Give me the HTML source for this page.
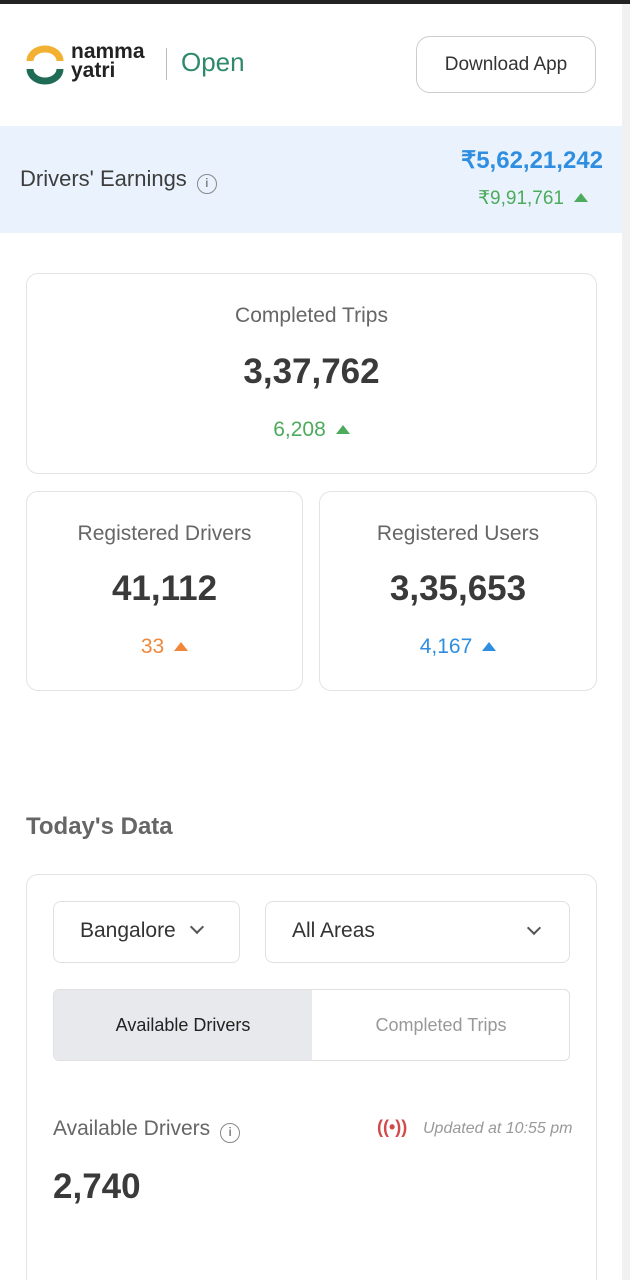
<!DOCTYPE html>
<html style="overflow:hidden;height:1280px"><head><meta charset="utf-8"><style>
*{box-sizing:border-box;margin:0;padding:0}
body{width:630px;height:1280px;overflow:hidden;background:#fff;font-family:"Liberation Sans",sans-serif;color:#3d3d3d;position:relative}
.a{position:absolute}
.card{position:absolute;border:1px solid #e3e3e3;border-radius:12px;background:#fff}
.c{text-align:center;width:100%;position:absolute;left:0}
.lab{font-size:21px;color:#666}
.big{font-size:35px;font-weight:bold;color:#3a3a3a}
.tri{display:inline-block;width:0;height:0;border-left:7px solid transparent;border-right:7px solid transparent;border-bottom:9px solid;margin-left:10px;vertical-align:2px}
.info{display:inline-block;width:20px;height:20px;border:1.5px solid #888;border-radius:50%;font-size:12px;text-align:center;line-height:17px;color:#888;font-weight:bold;vertical-align:-1px;margin-left:10px}
</style></head><body>
<div class="a" style="left:0;top:0;width:630px;height:4px;background:#222"></div>
<div class="a" style="left:622px;top:4px;width:8px;height:1276px;background:#f1f1f1"></div>
<svg class="a" style="left:26px;top:44px" width="38" height="42" viewBox="0 0 38 42"><path d="M4 17 A15 12 0 0 1 34 17" fill="none" stroke="#f2b132" stroke-width="7"/><path d="M4 25 A15 12 0 0 0 34 25" fill="none" stroke="#1f6b55" stroke-width="7"/></svg>
<div class="a" style="left:71px;top:42px;font-size:21px;line-height:19px;color:#222;font-weight:bold">namma<br>yatri</div>
<div class="a" style="left:166px;top:48px;width:1px;height:32px;background:#bbb"></div>
<div class="a" style="left:181px;top:47px;font-size:26px;color:#2e8a6a">Open</div>
<div class="a" style="left:416px;top:36px;width:180px;height:57px;border:1px solid #ccc;border-radius:14px;text-align:center;line-height:55px;font-size:19px;color:#333">Download App</div>
<div class="a" style="left:0;top:126px;width:622px;height:107px;background:#eaf3fd"></div>
<div class="a" style="left:20px;top:166px;font-size:22px;color:#3d3d3d">Drivers' Earnings<span class="info">i</span></div>
<div class="a" style="right:27px;top:146px;font-size:24px;font-weight:bold;color:#2f8ee0">₹5,62,21,242</div>
<div class="a" style="right:42px;top:187px;font-size:19px;color:#4cab5c">₹9,91,761<span class="tri" style="border-bottom-color:#4cab5c"></span></div>
<div class="card" style="left:26px;top:273px;width:571px;height:201px">
<div class="c lab" style="top:30px">Completed Trips</div>
<div class="c big" style="top:78px">3,37,762</div>
<div class="c" style="top:144px;font-size:21px;color:#4cab5c">6,208<span class="tri" style="border-bottom-color:#4cab5c"></span></div></div>
<div class="card" style="left:26px;top:491px;width:277px;height:200px">
<div class="c lab" style="top:30px">Registered Drivers</div>
<div class="c big" style="top:77px">41,112</div>
<div class="c" style="top:143px;font-size:21px;color:#f0883a">33<span class="tri" style="border-bottom-color:#f0883a"></span></div></div>
<div class="card" style="left:319px;top:491px;width:278px;height:200px">
<div class="c lab" style="top:30px">Registered Users</div>
<div class="c big" style="top:77px">3,35,653</div>
<div class="c" style="top:143px;font-size:21px;color:#2f8ee0">4,167<span class="tri" style="border-bottom-color:#2f8ee0"></span></div></div>
<div class="a" style="left:26px;top:813px;font-size:24px;font-weight:bold;color:#666">Today's Data</div>
<div class="card" style="left:26px;top:874px;width:571px;height:420px">
<div class="a" style="left:26px;top:26px;width:187px;height:62px;border:1px solid #e0e0e0;border-radius:8px;font-size:21px;padding:17px 26px;color:#333">Bangalore <span style="display:inline-block;width:10px;height:10px;border-right:2px solid #555;border-bottom:2px solid #555;transform:rotate(45deg);margin-left:10px;vertical-align:5px"></span></div>
<div class="a" style="left:238px;top:26px;width:305px;height:62px;border:1px solid #e0e0e0;border-radius:8px;font-size:21px;padding:17px 26px;color:#333">All Areas<span style="position:absolute;right:30px;top:21px;width:10px;height:10px;border-right:2px solid #555;border-bottom:2px solid #555;transform:rotate(45deg)"></span></div>
<div class="a" style="left:26px;top:114px;width:517px;height:72px;border:1px solid #e0e0e0;border-radius:6px;overflow:hidden">
<div class="a" style="left:0;top:0;width:258px;height:72px;background:#e8e9ec;text-align:center;line-height:70px;font-size:18px;color:#222">Available Drivers</div>
<div class="a" style="left:258px;top:0;width:258px;height:72px;text-align:center;line-height:70px;font-size:18px;color:#999">Completed Trips</div></div>
<div class="a" style="left:26px;top:242px;font-size:21px;color:#666">Available Drivers<span class="info">i</span></div>
<div class="a" style="left:350px;top:242px;font-size:18px;color:#d24a4a;font-weight:bold">((•))</div>
<div class="a" style="left:396px;top:245px;font-size:16px;font-style:italic;color:#999">Updated at 10:55 pm</div>
<div class="a" style="left:26px;top:292px;font-size:35px;font-weight:bold;color:#3a3a3a">2,740</div>
</div>
</body></html>
